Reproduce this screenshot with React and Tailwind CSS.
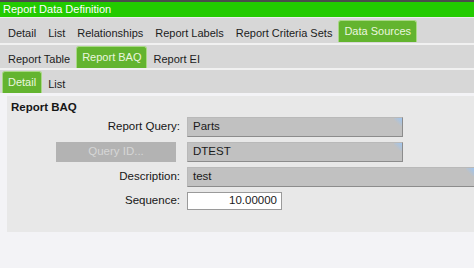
import React from 'react';

const font = "font-['Liberation_Sans',Arial,sans-serif]";

const Tab = ({ label, active }) => {
  if (active) {
    return (
      <div className="h-full flex items-center px-[5px] border border-b-0 border-[#a9d886] rounded-t-[3px] bg-[#63b42f] text-[#eaf6df]">
        {label}
      </div>
    );
  }
  return (
    <div className="h-full flex items-center px-[6px] text-[#1c1c1c]">
      <span className="translate-y-[2px]">{label}</span>
    </div>
  );
};

const TabRow = ({ tabs, active, className }) => (
  <div className={`flex items-start bg-[#d7d7d7] pl-[2px] ${className}`}>
    <div className="flex h-[22px]">
      {tabs.map((t) => (
        <Tab key={t} label={t} active={t === active} />
      ))}
    </div>
  </div>
);

const Field = ({ value, className = '' }) => (
  <div
    className={`relative h-[20px] flex items-center pl-[5px] bg-[#c1c1c1] border border-t-[#b9b9b9] border-l-[#b9b9b9] border-r-[#8c8c8c] border-b-[#8c8c8c] text-[#1a1a1a] ${className}`}
  >
    {value}
    <div className="absolute top-0 right-0 w-[8px] h-[8px] bg-[linear-gradient(225deg,#9ec5f0_0%,rgba(158,197,240,0)_65%)]" />
  </div>
);

const Label = ({ children }) => (
  <div className="w-[173px] text-right text-[#161616]">{children}</div>
);

export default function App() {
  return (
    <div className={`w-[474px] h-[268px] overflow-hidden bg-[#f3f3f6] text-[11px] ${font}`}>
      <div className="h-[2px] bg-[#4b4b4b]" />
      <div className="h-[15px] bg-[#22cb00] text-white leading-[15px] pl-[3px]">Report Data Definition</div>
      <div className="h-[1px] bg-[#ececec]" />

      <TabRow
        className="h-[25px] pt-[2px]"
        tabs={['Detail', 'List', 'Relationships', 'Report Labels', 'Report Criteria Sets', 'Data Sources']}
        active="Data Sources"
      />
      <div className="h-[2px] bg-[#f1f1f1]" />
      <TabRow
        className="h-[23px] pt-[1px]"
        tabs={['Report Table', 'Report BAQ', 'Report EI']}
        active="Report BAQ"
      />
      <div className="h-[2px] bg-[#f1f1f1]" />
      <TabRow className="h-[23px] pt-[1px]" tabs={['Detail', 'List']} active="Detail" />

      <div className="pt-[3px] pl-[7px]">
        <div className="h-[136px] bg-[#e8e8e8] pt-[4px] text-[11.5px]">
          <div className="pl-[4px] leading-[14px] font-bold text-[#161616]">Report BAQ</div>
          <div className="mt-[3px] flex flex-col gap-[5px]">
            <div className="flex items-center gap-[7px]">
              <Label>Report Query:</Label>
              <Field value="Parts" className="w-[216px]" />
            </div>
            <div className="flex items-center gap-[7px]">
              <div className="w-[173px] flex justify-end pr-[4px]">
                <div className="w-[120px] h-[20px] flex items-center justify-center bg-[#b3b3b3] text-[#d6d6d6]">
                  Query ID...
                </div>
              </div>
              <Field value="DTEST" className="w-[216px]" />
            </div>
            <div className="flex items-center gap-[7px]">
              <Label>Description:</Label>
              <Field value="test" className="flex-1 border-r-0" />
            </div>
            <div className="flex items-center gap-[7px]">
              <Label>Sequence:</Label>
              <div className="w-[95px] h-[18px] flex items-center justify-end pr-[4px] bg-white border border-[#9a9a9a] text-[#1a1a1a]">
                10.00000
              </div>
            </div>
          </div>
        </div>
      </div>
    </div>
  );
}
